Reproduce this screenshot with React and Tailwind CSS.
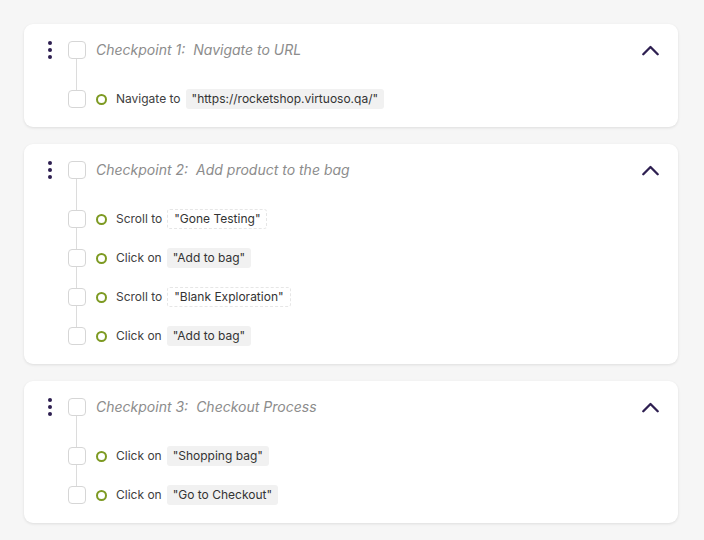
import React from "react";

const checkpoints = [
  {
    n: 1,
    title: "Navigate to URL",
    steps: [{ action: "Navigate to", value: '"https://rocketshop.virtuoso.qa/"', dashed: false }],
  },
  {
    n: 2,
    title: "Add product to the bag",
    steps: [
      { action: "Scroll to", value: '"Gone Testing"', dashed: true },
      { action: "Click on", value: '"Add to bag"', dashed: false },
      { action: "Scroll to", value: '"Blank Exploration"', dashed: true },
      { action: "Click on", value: '"Add to bag"', dashed: false },
    ],
  },
  {
    n: 3,
    title: "Checkout Process",
    steps: [
      { action: "Click on", value: '"Shopping bag"', dashed: false },
      { action: "Click on", value: '"Go to Checkout"', dashed: false },
    ],
  },
];

function Box() {
  return <div className="relative z-10 w-[18px] h-[18px] shrink-0 rounded-[4px] border border-[#d6d6d6] bg-white" />;
}

function Card({ cp }) {
  return (
    <div className="relative bg-white rounded-[9px] shadow-[0_1px_3px_rgba(0,0,0,0.10)] pt-[16px] pb-[18px]">
      <div className="relative">
        <div className="absolute left-[52px] top-[10px] bottom-[10px] w-px bg-[#dcdcdc]" />
        <div className="flex items-center h-[20px] pl-[24px] pr-[18px]">
          <div className="flex flex-col gap-[3px] w-[4px]">
            <span className="w-[4px] h-[4px] rounded-full bg-[#2e1f51]" />
            <span className="w-[4px] h-[4px] rounded-full bg-[#2e1f51]" />
            <span className="w-[4px] h-[4px] rounded-full bg-[#2e1f51]" />
          </div>
          <div className="ml-[16px]"><Box /></div>
          <div className="ml-[10px] -mt-[2px] italic text-[14px] text-[#8c8c8c] whitespace-nowrap">
            <span>Checkpoint {cp.n}:</span>
            <span className="ml-[8px]">{cp.title}</span>
          </div>
          <div className="ml-auto mr-[1px]">
            <svg width="17" height="11" viewBox="0 0 17 11" fill="none">
              <path d="M1.3 9.3 L8.5 2 L15.7 9.3" stroke="#2e1f51" strokeWidth="2.3" strokeLinecap="round" strokeLinejoin="round" />
            </svg>
          </div>
        </div>
        <div className="flex flex-col gap-[19px] mt-[29px]">
          {cp.steps.map((s, i) => (
            <div key={i} className="flex items-center h-[20px] pl-[44px]">
              <Box />
              <span className="ml-[10px] w-[11px] h-[11px] rounded-full border-[2.5px] border-[#7d9a22] box-border" />
              <span className="ml-[9px] text-[12px] text-[#404040] whitespace-nowrap">{s.action}</span>
              <span
                className={
                  "ml-[5px] h-[20px] flex items-center px-[6px] rounded-[3px] text-[12px] text-[#333333] whitespace-nowrap " +
                  (s.dashed ? "bg-white border border-dashed border-[#e6e6e6]" : "bg-[#f1f1f1]")
                }
              >
                {s.value}
              </span>
            </div>
          ))}
        </div>
      </div>
    </div>
  );
}

export default function App() {
  return (
    <div className="w-[704px] h-[540px] bg-[#f6f6f6] pt-[24px] pl-[24px] font-['Inter',sans-serif]">
      <div className="w-[654px] flex flex-col gap-[17px]">
        {checkpoints.map((cp) => (
          <Card key={cp.n} cp={cp} />
        ))}
      </div>
    </div>
  );
}
